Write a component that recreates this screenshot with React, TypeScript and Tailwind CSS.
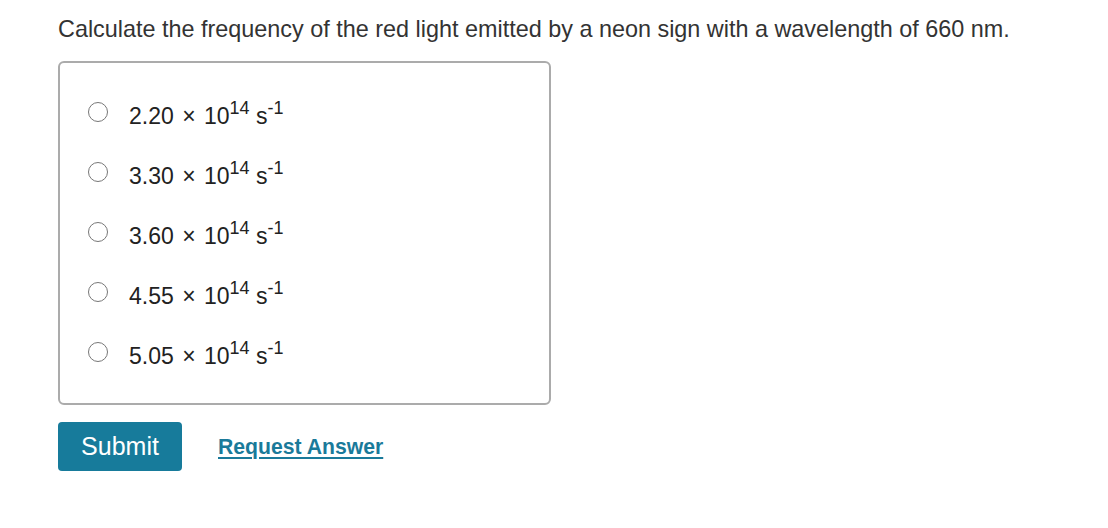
const options = ['2.20', '3.30', '3.60', '4.55', '5.05'];

function Option({ value }: { value: string }) {
  return (
    <label className="flex h-[60px] items-start gap-[21px] cursor-pointer">
      <span className="mt-[20px] block h-[20px] w-[20px] shrink-0 rounded-full border-[1.5px] border-[#777] bg-white" />
      <span className="mt-[23px] block whitespace-nowrap text-[23px] leading-[23px] text-[#222]">
        {value} <span className="mx-[2px]">×</span> 10
        <sup className="!-top-[10px] text-[18px]">14</sup> s
        <sup className="!-top-[10px] text-[18px]">-1</sup>
      </span>
    </label>
  );
}

export default function App() {
  return (
    <div className="min-h-screen bg-white pl-[58px] pt-[15px] font-['Liberation_Sans',Arial,sans-serif]">
      <p className="text-[23.4px] leading-[28px] text-[#333]">
        Calculate the frequency of the red light emitted by a neon sign with a wavelength of 660 nm.
      </p>

      <div className="mt-[18px] w-[493px] rounded-[6px] border-2 border-[#ababab] pb-[21px] pl-[28px] pt-[19px]">
        {options.map((v) => (
          <Option key={v} value={v} />
        ))}
      </div>

      <div className="mt-[17px] flex items-center">
        <button className="h-[49px] w-[124px] rounded-[4px] bg-[#177b9b] text-[25px] text-white">
          Submit
        </button>
        <a
          href="#"
          className="ml-[36px] text-[21.2px] font-bold text-[#1a7a9a] underline underline-offset-[3px]"
        >
          Request Answer
        </a>
      </div>
    </div>
  );
}
